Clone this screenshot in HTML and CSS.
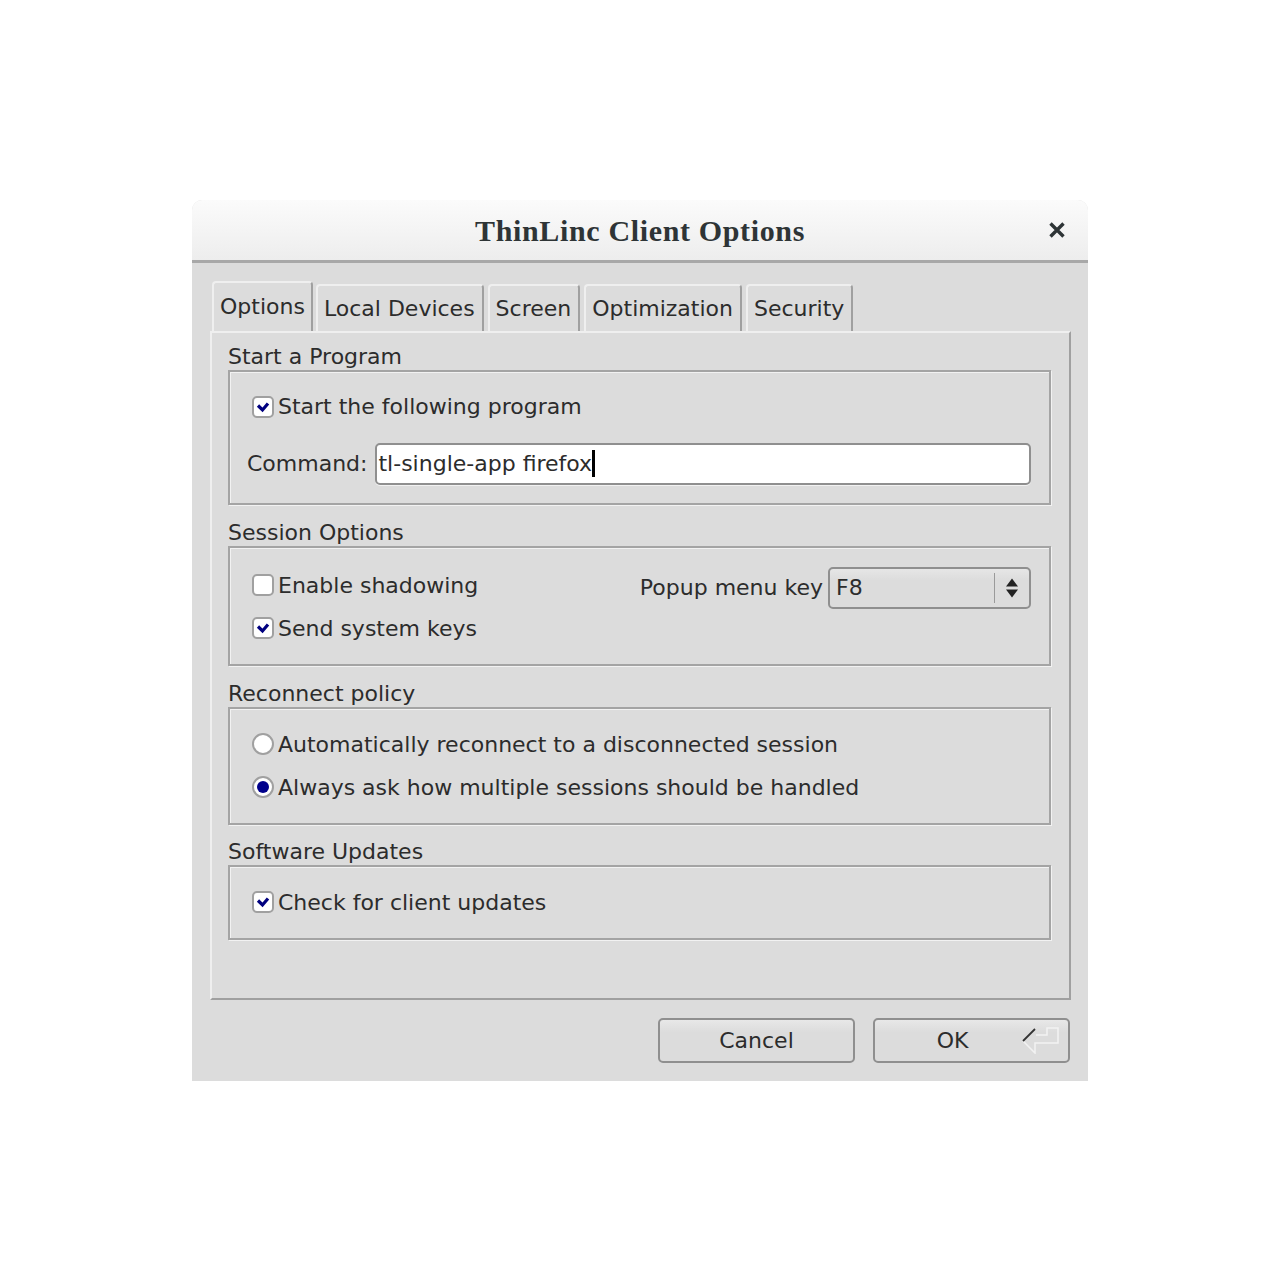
FILE: index.html
```html
<!DOCTYPE html>
<html lang="en">
<head>
    <meta charset="UTF-8">
    <title>ThinLinc Client Options</title>
    <link rel="stylesheet" href="styles.css">
</head>
<body>
    <div class="window">
        <header class="titlebar">
            <h1>ThinLinc Client Options</h1>
            <svg class="close" width="16" height="16" viewBox="0 0 16 16"><path d="M1.5 1.5l13 13M14.5 1.5l-13 13" stroke="#2e3436" stroke-width="3.4" fill="none"/></svg>
        </header>
        <div class="content">
            <ul class="tabs">
                <li class="tab active">Options</li>
                <li class="tab">Local Devices</li>
                <li class="tab">Screen</li>
                <li class="tab">Optimization</li>
                <li class="tab">Security</li>
            </ul>
            <div class="panel">
                <section class="group">
                    <div class="legend">Start a Program</div>
                    <div class="box box-program">
                        <label class="check-row">
                            <span class="check"><svg width="14" height="12" viewBox="0 0 14 12"><path d="M2 4.5l4.5 4.5 5.5-6.5" stroke="#00007f" stroke-width="3.2" fill="none"/></svg></span>
                            Start the following program
                        </label>
                        <div class="command-row">
                            <span>Command:</span>
                            <div class="entry">tl-single-app firefox<span class="caret"></span></div>
                        </div>
                    </div>
                </section>
                <section class="group">
                    <div class="legend">Session Options</div>
                    <div class="box box-session">
                        <div class="session-left">
                            <label class="check-row">
                                <span class="check"></span>
                                Enable shadowing
                            </label>
                            <label class="check-row">
                                <span class="check"><svg width="14" height="12" viewBox="0 0 14 12"><path d="M2 4.5l4.5 4.5 5.5-6.5" stroke="#00007f" stroke-width="3.2" fill="none"/></svg></span>
                                Send system keys
                            </label>
                        </div>
                        <div class="session-right">
                            <span>Popup menu key</span>
                            <div class="combo">
                                <span class="combo-value">F8</span>
                                <span class="combo-sep"></span>
                                <svg width="14" height="20" viewBox="0 0 14 20"><path d="M7 .5l6 8H1zM7 19.5l-6-8h12z" fill="#222"/></svg>
                            </div>
                        </div>
                    </div>
                </section>
                <section class="group">
                    <div class="legend">Reconnect policy</div>
                    <div class="box box-reconnect">
                        <label class="check-row">
                            <span class="radio"></span>
                            Automatically reconnect to a disconnected session
                        </label>
                        <label class="check-row">
                            <span class="radio selected"><span class="dot"></span></span>
                            Always ask how multiple sessions should be handled
                        </label>
                    </div>
                </section>
                <section class="group">
                    <div class="legend">Software Updates</div>
                    <div class="box box-updates">
                        <label class="check-row">
                            <span class="check"><svg width="14" height="12" viewBox="0 0 14 12"><path d="M2 4.5l4.5 4.5 5.5-6.5" stroke="#00007f" stroke-width="3.2" fill="none"/></svg></span>
                            Check for client updates
                        </label>
                    </div>
                </section>
            </div>
            <div class="buttons">
                <button class="btn">Cancel</button>
                <button class="btn btn-ok">
                    OK
                    <svg class="enter" width="38" height="28" viewBox="0 0 38 28"><path d="M1 15L13 27V17H36V2H25V9H14" stroke="#f2f2f2" stroke-width="1.6" fill="none"/><path d="M1 15L13 3" stroke="#333" stroke-width="1.8" fill="none"/></svg>
                </button>
            </div>
        </div>
    </div>
</body>
</html>
```
FILE: styles.css
```css
* {
    box-sizing: border-box;
}

body {
    margin: 0;
    min-height: 100vh;
    display: flex;
    align-items: center;
    justify-content: center;
    background-color: #fff;
    font-family: "DejaVu Sans", sans-serif;
    font-size: 22px;
    color: #2c2c2c;
}

.window {
    width: 896px;
    height: 881px;
    background-color: #dcdcdc;
    border-radius: 10px 10px 0 0;
}

.titlebar {
    position: relative;
    height: 63px;
    display: flex;
    align-items: center;
    justify-content: center;
    background: linear-gradient(#fbfbfb, #ededed);
    border-bottom: 3px solid #a8a8a8;
    border-radius: 10px 10px 0 0;
}

.titlebar h1 {
    margin: 2px 0 0;
    font-family: "Liberation Serif", serif;
    font-size: 30px;
    font-weight: bold;
    letter-spacing: 0.65px;
    color: #2e3436;
}

.close {
    position: absolute;
    top: 22px;
    right: 23px;
}

.content {
    padding: 18px 17px 0 18px;
}

.tabs {
    list-style: none;
    margin: 0 0 0 2px;
    padding: 0;
    height: 50px;
    display: flex;
    align-items: flex-end;
    gap: 4px;
}

.tab {
    height: 47px;
    padding: 1px 7px 0 6px;
    display: flex;
    align-items: center;
    border-top: 2px solid #efefef;
    border-left: 2px solid #efefef;
    border-right: 2px solid #a0a0a0;
    border-radius: 4px 4px 0 0;
}

.tab.active {
    height: 50px;
    padding-top: 0;
    padding-right: 6px;
    margin-right: -1px;
}

.panel {
    height: 669px;
    padding: 11px 18px 0 16px;
    border-top: 2px solid #efefef;
    border-left: 2px solid #efefef;
    border-right: 2px solid #a0a0a0;
    border-bottom: 2px solid #a0a0a0;
}

.group {
    margin-bottom: 15px;
}

.legend {
    height: 26px;
    line-height: 26px;
}

.box {
    border: 2px solid #a4a4a4;
    box-shadow: inset 1px 1px 0 #f2f2f2, 1px 1px 0 #f2f2f2;
    padding-left: 22px;
}

.box-program {
    height: 135px;
    padding-top: 15px;
}

.box-session {
    height: 120px;
    padding-top: 16px;
    padding-right: 18px;
    display: flex;
    justify-content: space-between;
}

.box-reconnect {
    height: 118px;
    margin-bottom: -1px;
    padding-top: 14px;
}

.box-updates {
    height: 75px;
    padding-top: 14px;
}

.check-row {
    height: 43px;
    display: flex;
    align-items: center;
    gap: 4px;
    white-space: nowrap;
}

.box-program .check-row {
    height: 40px;
}

.check {
    width: 22px;
    height: 22px;
    flex: none;
    display: flex;
    align-items: center;
    justify-content: center;
    background-color: #fff;
    border: 2px solid #a0a0a0;
    border-radius: 5px;
}

.radio {
    width: 22px;
    height: 22px;
    flex: none;
    display: flex;
    align-items: center;
    justify-content: center;
    background-color: #fff;
    border: 2px solid #a0a0a0;
    border-radius: 50%;
}

.dot {
    width: 12px;
    height: 12px;
    background-color: #00008b;
    border-radius: 50%;
}

.command-row {
    margin-top: 16px;
    margin-left: -5px;
    margin-right: 18px;
    display: flex;
    align-items: center;
    gap: 8px;
}

.entry {
    flex: 1;
    height: 42px;
    padding-left: 1px;
    display: flex;
    align-items: center;
    background-color: #fff;
    border: 2px solid #8f8f8f;
    border-radius: 5px;
    box-shadow: 0 1px 0 #f2f2f2;
}

.caret {
    width: 3px;
    height: 27px;
    background-color: #000;
}

.session-right {
    height: 42px;
    margin-top: 3px;
    display: flex;
    align-items: center;
    gap: 5px;
}

.combo {
    width: 203px;
    height: 42px;
    padding: 0 10px 0 6px;
    display: flex;
    align-items: center;
    border: 2px solid #8f8f8f;
    border-radius: 5px;
    background: linear-gradient(#e6e6e6, #dcdcdc 30%);
}

.combo-value {
    flex: 1;
}

.combo-sep {
    width: 1px;
    height: 30px;
    margin-right: 10px;
    background-color: #9a9a9a;
}

.buttons {
    margin-top: 18px;
    padding-right: 1px;
    display: flex;
    justify-content: flex-end;
    gap: 18px;
}

.btn {
    position: relative;
    width: 197px;
    height: 45px;
    padding: 0;
    font-family: inherit;
    font-size: inherit;
    color: inherit;
    border: 2px solid #8f8f8f;
    border-radius: 5px;
    background: linear-gradient(#e8e8e8, #dcdcdc 30%);
}

.btn-ok {
    padding-right: 38px;
}

.enter {
    position: absolute;
    top: 6px;
    right: 8px;
}
```
